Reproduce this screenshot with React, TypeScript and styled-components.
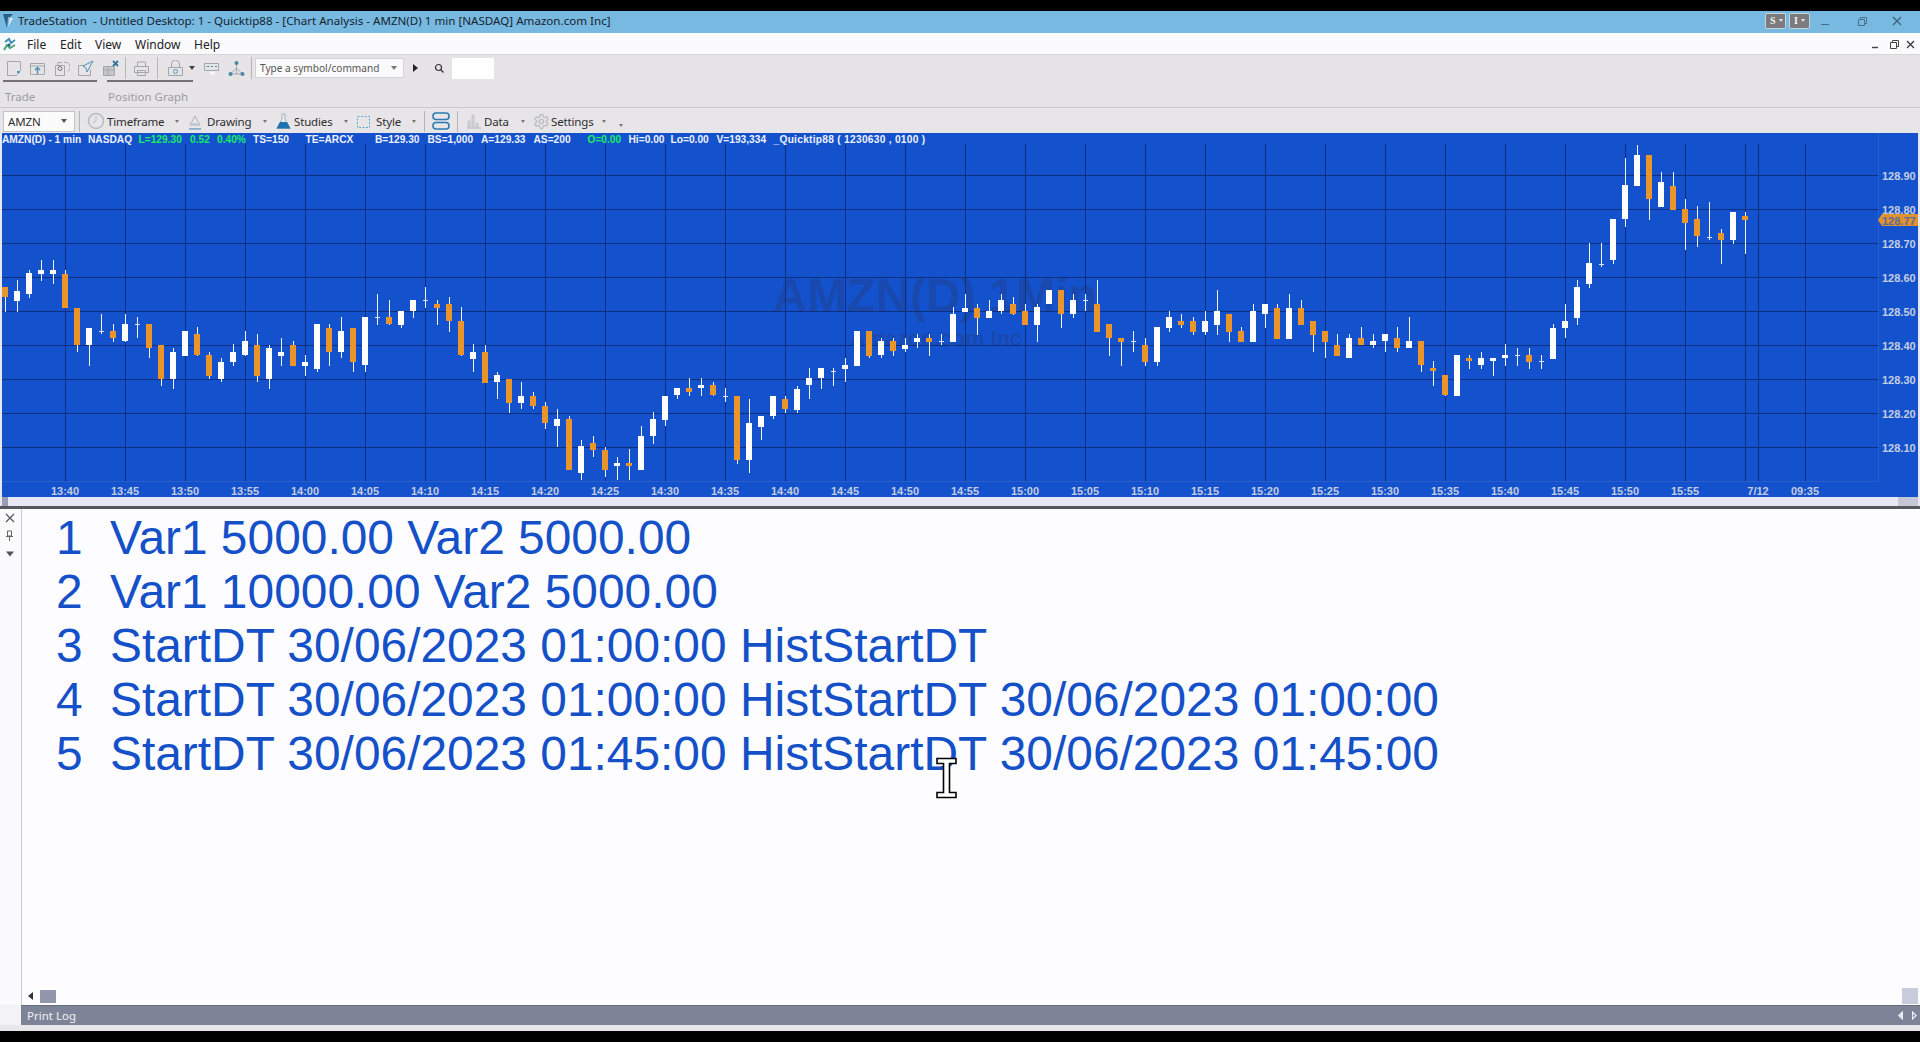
import React from "react";
import styled, { createGlobalStyle } from "styled-components";

const Global = createGlobalStyle`
  html, body { margin: 0; padding: 0; background: #000; }
  * { box-sizing: border-box; }
`;

const UI = `"Noto Sans", "Open Sans", sans-serif`;
const ARIAL = `"Liberation Sans", Arial, sans-serif`;

const Page = styled.div`
  position: relative;
  width: 1920px;
  height: 1042px;
  background: #000;
  display: flex;
  flex-direction: column;
  overflow: hidden;
  font-family: ${UI};
`;
const BlackBand = styled.div<{ $h: number }>`
  flex: 0 0 ${(p) => p.$h}px;
  background: #000;
`;
const TitleBar = styled.div`
  flex: 0 0 22px;
  display: flex;
  align-items: center;
  background: #77b9e0;
  color: #16232e;
  font-size: 11.6px;
  padding: 0 0 3px 2px;
`;
const TitleText = styled.span`
  margin-left: 4px;
  white-space: pre;
`;
const TitleRight = styled.div`
  margin-left: auto;
  display: flex;
  align-items: center;
`;
const SIButton = styled.div<{ $ml: number }>`
  width: 21px;
  height: 16px;
  margin-left: ${(p) => p.$ml}px;
  background: #7b7b7d;
  border: 1px solid #c5d5df;
  border-radius: 2px;
  color: #f4f4f4;
  font: bold 10px "Liberation Serif", serif;
  display: flex;
  align-items: center;
  padding-left: 4px;
  gap: 3px;
`;
const MiniCaret = styled.span`
  width: 0;
  height: 0;
  border-left: 2px solid transparent;
  border-right: 2px solid transparent;
  border-top: 3px solid #e6e6e6;
`;
const WinGlyph = styled.svg<{ $ml: number; $mr?: number }>`
  display: block;
  margin-left: ${(p) => p.$ml}px;
  margin-right: ${(p) => p.$mr ?? 0}px;
  flex: none;
`;
const MenuBar = styled.div`
  flex: 0 0 22px;
  display: flex;
  align-items: center;
  background: #fbfafd;
  border-bottom: 1px solid #d6d6da;
  color: #222;
  font-size: 12px;
  padding: 1px 0 0 3px;
`;
const MenuItem = styled.span<{ $w: number }>`
  width: ${(p) => p.$w}px;
  flex: none;
`;
const MenuLogoBox = styled.span`
  width: 24px;
  flex: none;
  display: flex;
`;
const ToolArea = styled.div`
  flex: 0 0 53px;
  background: #e7e4e7;
  border-bottom: 1px solid #c9c9d2;
  display: flex;
  flex-direction: column;
`;
const IconRow = styled.div`
  height: 25px;
  display: flex;
  align-items: center;
  padding-top: 1px;
`;
const ToolIconBox = styled.span<{ $ml: number; $w?: number }>`
  margin-left: ${(p) => p.$ml}px;
  width: ${(p) => p.$w ?? 17}px;
  flex: none;
  display: flex;
  justify-content: center;
  align-items: center;
`;
const VSep = styled.span<{ $ml: number; $h?: number; $c?: string }>`
  margin-left: ${(p) => p.$ml}px;
  width: 1px;
  height: ${(p) => p.$h ?? 22}px;
  background: ${(p) => p.$c ?? "#b4b4b8"};
  flex: none;
`;
const SymbolInput = styled.div`
  margin-left: 3px;
  width: 149px;
  height: 20px;
  background: #fafafa;
  border: 1px solid #d4d4d8;
  color: #555;
  font-size: 10.1px;
  display: flex;
  align-items: center;
  padding: 0 6px 0 4px;
  justify-content: space-between;
  flex: none;
`;
const PlayGlyph = styled.svg`
  margin-left: 6px;
  flex: none;
`;
const BlankBox = styled.div`
  margin-left: 7px;
  width: 42px;
  height: 21px;
  background: #fff;
  flex: none;
`;
const DarkCaret = styled.span<{ $ml?: number; $c?: string }>`
  display: inline-block;
  margin-left: ${(p) => p.$ml ?? 0}px;
  width: 0;
  height: 0;
  border-left: 3px solid transparent;
  border-right: 3px solid transparent;
  border-top: 4px solid ${(p) => p.$c ?? "#555"};
  flex: none;
`;
const UnderlineRow = styled.div`
  height: 2px;
  display: flex;
`;
const Underline = styled.span<{ $ml: number; $w: number }>`
  margin-left: ${(p) => p.$ml}px;
  width: ${(p) => p.$w}px;
  background: #727276;
`;
const TabLabels = styled.div`
  margin-top: 6px;
  height: 17px;
  display: flex;
  align-items: center;
  color: #9b9b9f;
  font-size: 11.5px;
`;
const TabLabel = styled.span<{ $ml: number; $w: number }>`
  margin-left: ${(p) => p.$ml}px;
  width: ${(p) => p.$w}px;
`;
const ChartBar = styled.div`
  flex: 0 0 25px;
  background: #e7e5e8;
  display: flex;
  align-items: center;
  color: #2d2d30;
  font-size: 11.5px;
  letter-spacing: -0.15px;
  padding: 1px 0 0 3px;
`;
const SymbolBox = styled.div`
  width: 72px;
  height: 21px;
  background: #fbfbfb;
  border: 1px solid #c4c4c8;
  display: flex;
  align-items: center;
  justify-content: space-between;
  padding: 0 7px 0 4px;
  font-size: 11.5px;
  flex: none;
`;
const ChartButton = styled.div<{ $w: number; $icon: number; $ml?: number }>`
  width: ${(p) => p.$w}px;
  margin-left: ${(p) => p.$ml ?? 0}px;
  flex: none;
  display: flex;
  align-items: center;
  svg { flex: none; }
  & > span:first-child {
    width: ${(p) => p.$icon}px;
    flex: none;
    display: flex;
  }
`;
const ButtonCaret = styled(DarkCaret)`
  margin-left: auto;
  margin-right: 8px;
  border-left-width: 2.5px;
  border-right-width: 2.5px;
  border-top: 3px solid #77777a;
`;
const LowCaret = styled(ButtonCaret)`
  margin: 9px 0 0 5px;
`;
const ChartPane = styled.div`
  position: relative;
  flex: 0 0 364px;
  background: #e8e8f4;
  padding: 0 2px;
`;
const ChartSvg = styled.svg`
  display: block;
  background: #1452cd;
`;
const Legend = styled.div`
  position: absolute;
  top: 0;
  left: 2px;
  height: 12px;
  display: flex;
  align-items: center;
  font: bold 10.2px ${ARIAL};
  white-space: pre;
`;
const LegendItem = styled.span<{ $w: number; $green?: boolean; $track?: number }>`
  width: ${(p) => p.$w}px;
  color: ${(p) => (p.$green ? "#17ee66" : "#eef1fb")};
  letter-spacing: ${(p) => p.$track ?? 0}px;
  flex: none;
`;
const HScroll = styled.div`
  flex: 0 0 9px;
  background: #e8e8f5;
  display: flex;
  justify-content: space-between;
  padding: 0 2px;
`;
const HScrollEnd = styled.span<{ $w: number; $c: string }>`
  width: ${(p) => p.$w}px;
  background: ${(p) => p.$c};
`;
const Divider = styled.div`
  flex: 0 0 3px;
  background: #54585f;
`;
const Lower = styled.div`
  flex: 1;
  display: flex;
  min-height: 0;
  background: #fdfcfe;
`;
const SidePanel = styled.div`
  flex: 0 0 22px;
  border-right: 1px solid #c9c9cf;
  background: #fbfbfd;
  display: flex;
  flex-direction: column;
  align-items: center;
  padding: 4px 2px 0 0;
`;
const SideGlyph = styled.svg<{ $mt: number }>`
  margin-top: ${(p) => p.$mt}px;
  display: block;
  flex: none;
`;
const LogPane = styled.div`
  flex: 1;
  display: flex;
  flex-direction: column;
  min-width: 0;
`;
const LogText = styled.div`
  flex: 1;
  padding: 2px 0 0 34px;
  color: #1450c8;
  font: 47.88px/54px ${ARIAL};
  white-space: pre;
`;
const LogRow = styled.div`
  display: flex;
  height: 54px;
`;
const LogNum = styled.span`
  width: 54px;
  flex: none;
`;
const LogScroll = styled.div`
  height: 17px;
  display: flex;
  align-items: center;
  padding: 0 2px 1px 6px;
`;
const LeftArrow = styled.span`
  width: 0;
  height: 0;
  border-top: 4px solid transparent;
  border-bottom: 4px solid transparent;
  border-right: 5px solid #333;
`;
const ScrollThumb = styled.span<{ $c: string; $ml?: string; $h: number }>`
  width: 16px;
  height: ${(p) => p.$h}px;
  background: ${(p) => p.$c};
  margin-left: ${(p) => p.$ml ?? "7px"};
`;
const TabRow = styled.div`
  flex: 0 0 20px;
  padding-left: 21px;
  background: #f3f3f6;
  display: flex;
`;
const TabBar = styled.div`
  flex: 1;
  background: #7e8497;
  border-top: 1px solid #686d7d;
  display: flex;
  align-items: center;
  color: #f0f1f5;
  font-size: 11.5px;
  padding: 0 0 0 6px;
`;
const TabNav = styled.div`
  margin-left: auto;
  display: flex;
  gap: 9px;
  padding-right: 3px;
`;
const BottomStrip = styled.div`
  flex: 0 0 6px;
  background: #e8e7ea;
`;
const Cursor = styled.svg`
  position: absolute;
  left: 936px;
  top: 757px;
`;

type C = [number, number, number, number, 0 | 1];
// wick top, wick bottom, body top, body bottom, orange — in the crop's y units
const bars: C[] = [
[472,545,472,502,1],[450,545,482,512,0],[420,503,430,492,0],[390,453,420,431,0],[390,462,420,431,0],
[420,533,431,533,1],[533,665,533,644,1],[593,707,593,644,0],[552,613,604,604,0],[582,635,604,625,1],
[552,635,583,635,0],[562,625,583,583,0],[583,685,583,654,1],[644,767,644,746,1],[655,777,665,746,0],
[603,677,603,677,0],[592,677,613,677,1],[665,747,675,737,1],[685,757,695,747,0],[643,707,665,696,0],
[603,677,634,677,0],[613,757,644,737,1],[644,777,655,747,0],[624,707,665,677,0],[634,707,644,707,1],
[675,737,695,707,0],[583,725,583,717,0],[583,707,593,665,1],[562,685,603,665,0],[593,725,593,695,1],
[562,725,562,707,0],[492,584,562,562,0],[511,584,562,584,1],[543,593,543,584,0],[511,564,511,544,0],
[472,533,511,511,0],[511,584,522,533,1],[502,605,522,574,1],[532,677,574,677,1],[643,725,665,685,0],
[644,757,665,757,1],[725,808,736,757,0],[746,848,746,817,1],[757,838,797,817,0],[787,838,797,827,1],
[817,898,827,878,1],[838,950,868,889,0],[858,1021,868,1021,1],[930,1049,949,1030,0],[918,980,939,959,1],
[950,1040,959,1020,1],[980,1049,1000,1010,0],[958,1049,1000,1010,1],[888,1021,918,1021,0],[847,941,868,919,0],
[797,889,797,868,0],[775,808,775,797,0],[745,797,775,787,1],[745,797,766,776,0],[757,797,766,797,1],
[775,817,797,797,0],[797,1001,797,990,1],[807,1030,878,990,0],[857,930,857,889,0],[797,868,797,858,0],
[797,848,807,838,1],[767,848,776,838,0],[715,808,745,767,0],[715,777,715,746,0],[715,767,723,723,0],
[685,757,705,716,0],[603,707,603,707,0],[603,685,603,677,1],[624,685,634,677,0],[624,677,634,665,1],
[624,665,644,655,0],[613,655,624,635,0],[613,677,624,635,1],[613,645,634,634,0],[532,636,552,636,0],
[492,545,533,544,0],[522,615,533,564,1],[511,564,543,563,0],[492,553,511,544,0],[502,554,522,553,1],
[522,585,543,585,1],[522,636,532,585,0],[481,523,481,523,0],[481,594,481,553,1],[492,564,511,553,0],
[492,544,511,511,0],[451,605,522,605,1],[583,677,583,625,1],[624,707,624,635,1],[603,665,634,634,0],
[624,707,644,696,1],[592,707,592,696,0],[543,605,562,594,0],[552,594,573,584,1],[562,615,573,605,1],
[543,615,573,605,0],[481,615,543,584,0],[552,636,552,605,1],[592,636,603,636,1],[522,636,543,636,0],
[522,594,522,553,0],[522,625,533,625,1],[492,626,533,625,0],[511,585,533,585,1],[573,665,573,615,1],
[603,685,603,635,1],[613,677,644,677,1],[613,685,624,685,0],[592,645,624,644,1],[613,655,634,645,0],
[613,665,613,635,0],[592,665,624,655,1],[562,655,634,655,0],[634,725,634,707,1],[693,767,715,725,1],
[736,797,736,797,1],[675,797,675,797,0],[675,717,685,695,1],[665,717,685,707,0],[685,737,685,695,0],
[643,707,675,685,0],[655,707,676,676,0],[655,717,675,695,1],[675,717,693,693,0],[583,685,593,685,0],
[522,625,573,594,0],[451,585,471,564,0],[339,473,400,462,0],[339,412,401,401,0],[268,401,268,391,0],
[85,290,166,269,0],[44,168,75,168,0],[75,270,75,208,1],[126,230,156,230,0],[126,240,167,240,1],
[207,361,238,280,1],[228,351,268,320,1],[217,329,320,320,0],[298,401,309,329,1],[247,341,247,330,0],
[247,371,258,269,1],
];
const realY = (v: number) => 130 + v / 3;
const barX = (i: number) => Math.round(65.3 + 12 * (i - 5));

const hLines = [175, 209, 243, 277, 311, 345, 379, 413, 447];
const prices = ["128.90", "128.80", "128.70", "128.60", "128.50", "128.40", "128.30", "128.20", "128.10"];
const times: [string, number][] = [];
for (let k = 0; k < 28; k++) {
  const m = 13 * 60 + 40 + k * 5;
  times.push([`${Math.floor(m / 60)}:${String(m % 60).padStart(2, "0")}`, Math.round(65.3 + 60 * k)]);
}
const labelled: [string, number][] = [...times, ["7/12", 1758], ["09:35", 1805]];
const vLines = [...times.map((t) => t[1]), 1745, 1758, 1805];

const legend: { t: string; w: number; g?: boolean; track?: number }[] = [
  { t: "AMZN(D) - 1 min", w: 86 },
  { t: "NASDAQ", w: 50.5 },
  { t: "L=129.30", w: 51.5, g: true },
  { t: "0.52", w: 27, g: true },
  { t: "0.40%", w: 36, g: true },
  { t: "TS=150", w: 52.5 },
  { t: "TE=ARCX", w: 69.5 },
  { t: "B=129.30", w: 52.5 },
  { t: "BS=1,000", w: 53.5 },
  { t: "A=129.33", w: 52.5 },
  { t: "AS=200", w: 54 },
  { t: "O=0.00", w: 41, g: true },
  { t: "Hi=0.00", w: 42 },
  { t: "Lo=0.00", w: 46 },
  { t: "V=193,334", w: 57 },
  { t: "_Quicktip88 ( 1230630 , 0100 )", w: 170, track: 0.27 },
];

const logLines: [string, string][] = [
  ["1", "Var1 5000.00 Var2 5000.00"],
  ["2", "Var1 10000.00 Var2 5000.00"],
  ["3", "StartDT 30/06/2023 01:00:00 HistStartDT"],
  ["4", "StartDT 30/06/2023 01:00:00 HistStartDT 30/06/2023 01:00:00"],
  ["5", "StartDT 30/06/2023 01:45:00 HistStartDT 30/06/2023 01:45:00"],
];

const G = "#a3a7ac";
const B = "#4f93b8";

const Ico = ({ children, w = 17, h = 17 }: { children: React.ReactNode; w?: number; h?: number }) => (
  <svg width={w} height={h} viewBox={`0 0 ${w} ${h}`} fill="none" stroke={G} strokeWidth="1">
    {children}
  </svg>
);

const ChartCanvas = () => (
  <ChartSvg width={1916} height={364} viewBox="2 133 1916 364">
    <text x="773" y="312" fontFamily={ARIAL} fontWeight="bold" fontSize="47.5" fill="#1949ae">AMZN(D) 1Min</text>
    <text x="850" y="346" fontFamily={ARIAL} fontWeight="bold" fontSize="21.6" fill="#1949ae">Amazon.com Inc</text>
    <g stroke="#0d2f7c" strokeWidth="1" shapeRendering="crispEdges">
      {hLines.map((y) => (
        <line key={y} x1="2" x2="1878" y1={y + 0.5} y2={y + 0.5} />
      ))}
      {vLines.map((x) => (
        <line key={x} x1={x + 0.5} x2={x + 0.5} y1="144" y2="481" />
      ))}
    </g>
    <g stroke="#2a5fc6" strokeWidth="1" shapeRendering="crispEdges">
      <line x1="2" x2="1878" y1="481.5" y2="481.5" />
      <line x1="1878.5" x2="1878.5" y1="133" y2="481" />
    </g>
    <g shapeRendering="crispEdges">
      {bars.map(([wt, wb, bt, bb, o], i) => {
        const x = barX(i);
        const top = realY(bt);
        const bot = realY(bb);
        const fill = o ? "#ea942a" : "#ffffff";
        return (
          <g key={i}>
            <rect x={x} y={realY(wt)} width="1" height={realY(wb) - realY(wt)} fill="#f2f5fd" />
            {bb - bt < 2 ? (
              <rect x={x - 2} y={Math.round(top)} width="5" height="1" fill="#dfe6f8" />
            ) : (
              <rect x={x - 3} y={Math.round(top)} width="6" height={Math.max(2, Math.round(bot - top))} fill={fill} />
            )}
          </g>
        );
      })}
    </g>
    <g fontFamily={ARIAL} fontWeight="bold" fontSize="11" fill="#c5cde0">
      {labelled.map(([t, x]) => (
        <text key={t} x={x} y="495" textAnchor="middle">{t}</text>
      ))}
      {prices.map((p, i) => (
        <text key={p} x="1882" y={hLines[i] + 4.5}>{p}</text>
      ))}
    </g>
    <polygon points="1878,220 1882,214 1918,214 1918,226 1882,226" fill="#df922e" />
    <text x="1882" y="224.5" fontFamily={ARIAL} fontWeight="bold" fontSize="11" fill="#5a6a9a">128.77</text>
  </ChartSvg>
);

export default function App() {
  return (
    <Page>
      <Global />
      <BlackBand $h={11} />
      <TitleBar>
        <svg width="12" height="16" viewBox="0 0 12 16">
          <path d="M1 1h10l-3 3H6l-1 11L3 8z" fill="#2a5f86" />
          <path d="M8 5l-2 9 5-9z" fill="#e8f0f5" />
        </svg>
        <TitleText>TradeStation  - Untitled Desktop: 1 - Quicktip88 - [Chart Analysis - AMZN(D) 1 min [NASDAQ] Amazon.com Inc]</TitleText>
        <TitleRight>
          <SIButton $ml={0}>S<MiniCaret /></SIButton>
          <SIButton $ml={3}>I<MiniCaret /></SIButton>
          <WinGlyph $ml={10} width="10" height="10" viewBox="0 0 10 10" stroke="#4b6f86" fill="none">
            <path d="M1 8.5h8" />
          </WinGlyph>
          <WinGlyph $ml={27} width="10" height="10" viewBox="0 0 10 10" stroke="#4b6f86" fill="none">
            <path d="M1.5 3.5h6v6h-6zM3.5 3.5v-2h6v6h-2" />
          </WinGlyph>
          <WinGlyph $ml={25} $mr={18} width="10" height="10" viewBox="0 0 10 10" stroke="#3f5f74" strokeWidth="1.2" fill="none">
            <path d="M1 1l8 8M9 1l-8 8" />
          </WinGlyph>
        </TitleRight>
      </TitleBar>
      <MenuBar>
        <MenuLogoBox>
          <svg width="13" height="15" viewBox="0 0 13 15">
            <path d="M2 5l4-3 2 4 4-3" stroke="#3d8fb4" strokeWidth="2" fill="none" />
            <path d="M1 13l3-5 3 3 5-3" stroke="#4aa37a" strokeWidth="2" fill="none" />
            <circle cx="6" cy="8" r="1.5" fill="#245f84" />
          </svg>
        </MenuLogoBox>
        <MenuItem $w={33}>File</MenuItem>
        <MenuItem $w={35}>Edit</MenuItem>
        <MenuItem $w={40}>View</MenuItem>
        <MenuItem $w={59}>Window</MenuItem>
        <MenuItem $w={40}>Help</MenuItem>
        <TitleRight>
          <WinGlyph $ml={0} width="9" height="9" viewBox="0 0 9 9" stroke="#444" strokeWidth="1.4" fill="none">
            <path d="M1 7.5h6" />
          </WinGlyph>
          <WinGlyph $ml={9} width="10" height="10" viewBox="0 0 10 10" stroke="#444" fill="none">
            <path d="M1.5 3.5h6v6h-6zM3.5 3.5v-2h6v6h-2" />
          </WinGlyph>
          <WinGlyph $ml={7} $mr={5} width="9" height="9" viewBox="0 0 9 9" stroke="#333" strokeWidth="1.2" fill="none">
            <path d="M1 1l7 7M8 1l-7 7" />
          </WinGlyph>
        </TitleRight>
      </MenuBar>
      <ToolArea>
        <IconRow>
          <ToolIconBox $ml={6}>
            <Ico><path d="M1.5 1.5h13v9l-4 5h-9z" /><path d="M11 12l3 0" stroke={B} strokeWidth="2" /></Ico>
          </ToolIconBox>
          <ToolIconBox $ml={6}>
            <Ico><path d="M1.5 3.5h14v11h-14z M1.5 6h14" /><path d="M8.5 14V8M6 10l2.5-2.5L11 10" stroke={B} strokeWidth="1.5" /></Ico>
          </ToolIconBox>
          <ToolIconBox $ml={7}>
            <Ico><path d="M2.5 5.5h9v10h-9zM5 5V2.5h4M11 2.5a5 5 0 0 1 4 9" /><circle cx="7" cy="8.5" r="2" stroke="#777" /></Ico>
          </ToolIconBox>
          <ToolIconBox $ml={7}>
            <Ico><path d="M1.5 5.5h6M1.5 5.5v10h12v-6" /><path d="M16 1L6 6l3 2 1 4z" stroke={B} /></Ico>
          </ToolIconBox>
          <ToolIconBox $ml={8}>
            <Ico><path d="M1.5 6.5h11v9h-11z" fill="#c6c6c8" /><path d="M1.5 10h11M6 6.5v9" /><path d="M11 1l5 5M16 1l-5 5" stroke="#2f7296" strokeWidth="1.8" /></Ico>
          </ToolIconBox>
          <VSep $ml={6} />
          <ToolIconBox $ml={7}>
            <Ico><path d="M4.5 6V2h8v4M1.5 6.5h14v6h-14zM4.5 10.5h8v5h-8z" /></Ico>
          </ToolIconBox>
          <VSep $ml={7} />
          <ToolIconBox $ml={9}>
            <Ico><path d="M1.5 7.5h14v8h-14zM4.5 7V4a4 4 0 0 1 8 0v3" /><circle cx="8.5" cy="11.5" r="2" stroke={B} /></Ico>
          </ToolIconBox>
          <DarkCaret $ml={5} $c="#444" />
          <ToolIconBox $ml={9} $w={15}>
            <Ico w={15} h={15}><path d="M.5 2.5h14v7H.5z" /><path d="M2.5 5.5h3M7 5.5h2M11 5.5h2" stroke={B} /><path d="M6 12h5" stroke="#f7f7f7" strokeWidth="3" /></Ico>
          </ToolIconBox>
          <ToolIconBox $ml={9}>
            <Ico><path d="M8.5 3v5L2.5 14M8.5 8l6 6M2.5 14h12M8.5 3v11" /><circle cx="8.5" cy="3" r="2" fill="#4c86a8" stroke="none" /><circle cx="2.5" cy="14" r="2" fill="#4c86a8" stroke="none" /><circle cx="14.5" cy="14" r="2" fill="#4c86a8" stroke="none" /></Ico>
          </ToolIconBox>
          <VSep $ml={6} />
          <SymbolInput>Type a symbol/command<DarkCaret $c="#777" /></SymbolInput>
          <PlayGlyph width="23" height="14" viewBox="0 0 23 14">
            <path d="M3 3l5 4-5 4z" fill="#222" />
          </PlayGlyph>
          <svg width="12" height="12" viewBox="0 0 12 12" fill="none" stroke="#333" strokeWidth="1.2">
            <circle cx="5.5" cy="5.5" r="3" /><path d="M8 8l2.5 2.5" />
          </svg>
          <BlankBox />
        </IconRow>
        <UnderlineRow>
          <Underline $ml={3} $w={94} />
          <Underline $ml={10} $w={86} />
        </UnderlineRow>
        <TabLabels>
          <TabLabel $ml={5} $w={103}>Trade</TabLabel>
          <TabLabel $ml={0} $w={100}>Position Graph</TabLabel>
        </TabLabels>
      </ToolArea>
      <ChartBar>
        <SymbolBox>AMZN<DarkCaret $c="#555" /></SymbolBox>
        <VSep $ml={4} $h={21} />
        <ChartButton $w={100} $icon={20} $ml={7}>
          <span>
            <Ico w={18} h={18}><circle cx="9" cy="9" r="7.5" stroke="#b8bcc0" strokeWidth="1.5" /><path d="M9 4v5l-3 2" stroke="#b8bcc0" /></Ico>
          </span>
          Timeframe<ButtonCaret />
        </ChartButton>
        <ChartButton $w={88} $icon={20}>
          <span>
            <Ico w={16} h={17}><path d="M2 15.5h12M3 12l5-9 5 9z" stroke="#b0b4b8" /><path d="M2 16h12" stroke="#7fb0cc" strokeWidth="1.5" /><path d="M5 11h6" stroke="#9fbccd" /></Ico>
          </span>
          Drawing<ButtonCaret />
        </ChartButton>
        <ChartButton $w={81} $icon={19}>
          <span>
            <svg width="17" height="17" viewBox="0 0 17 17">
              <path d="M7 1h3v5l5 9.5H2L7 6z" fill="#e6eef4" stroke="#a2b0ba" />
              <path d="M5 9h7l3.5 6.5h-14z" fill="#1f74ad" />
            </svg>
          </span>
          Studies<ButtonCaret />
        </ChartButton>
        <ChartButton $w={68} $icon={20}>
          <span>
            <svg width="16" height="16" viewBox="0 0 16 16" fill="none" stroke="#5aa7cf" strokeDasharray="2 1.5">
              <path d="M1.5 3.5h12v11h-12z" />
            </svg>
          </span>
          Style<ButtonCaret />
        </ChartButton>
        <VSep $h={21} $ml={0} />
        <ToolIconBox $ml={7} $w={18}>
          <svg width="18" height="20" viewBox="0 0 18 20" fill="none" stroke="#2a7cb0" strokeWidth="1.6">
            <rect x="1" y="2" width="16" height="6.5" rx="3" />
            <rect x="1" y="11.5" width="16" height="6.5" rx="3" />
          </svg>
        </ToolIconBox>
        <VSep $ml={7} $h={21} />
        <ChartButton $w={67} $icon={18} $ml={8}>
          <span>
            <Ico w={16} h={16}><path d="M2 14V8h2v6zM6 14V2h2v12zM10 14v-4h2v4z" stroke="#c3c5c8" fill="#d4d4d6" /><path d="M1 15h14" stroke="#b4b6b8" /></Ico>
          </span>
          Data<ButtonCaret />
        </ChartButton>
        <ChartButton $w={81} $icon={18}>
          <span>
            <svg width="17" height="17" viewBox="0 0 24 24" fill="none" stroke="#bcbec2" strokeWidth="2">
              <path d="M12.22 2h-.44a2 2 0 0 0-2 2v.18a2 2 0 0 1-1 1.73l-.43.25a2 2 0 0 1-2 0l-.15-.08a2 2 0 0 0-2.73.73l-.22.38a2 2 0 0 0 .73 2.73l.15.1a2 2 0 0 1 1 1.72v.51a2 2 0 0 1-1 1.74l-.15.09a2 2 0 0 0-.73 2.73l.22.38a2 2 0 0 0 2.73.73l.15-.08a2 2 0 0 1 2 0l.43.25a2 2 0 0 1 1 1.73V20a2 2 0 0 0 2 2h.44a2 2 0 0 0 2-2v-.18a2 2 0 0 1 1-1.73l.43-.25a2 2 0 0 1 2 0l.15.08a2 2 0 0 0 2.73-.73l.22-.39a2 2 0 0 0-.73-2.73l-.15-.08a2 2 0 0 1-1-1.74v-.5a2 2 0 0 1 1-1.74l.15-.09a2 2 0 0 0 .73-2.73l-.22-.38a2 2 0 0 0-2.73-.73l-.15.08a2 2 0 0 1-2 0l-.43-.25a2 2 0 0 1-1-1.73V4a2 2 0 0 0-2-2z" />
              <circle cx="12" cy="12" r="3" />
            </svg>
          </span>
          Settings<ButtonCaret />
        </ChartButton>
        <LowCaret />
      </ChartBar>
      <ChartPane>
        <ChartCanvas />
        <Legend>
          {legend.map((l) => (
            <LegendItem key={l.t} $w={l.w} $green={l.g} $track={l.track}>{l.t}</LegendItem>
          ))}
        </Legend>
      </ChartPane>
      <HScroll>
        <HScrollEnd $w={6} $c="#9a9db0" />
        <HScrollEnd $w={20} $c="#c5c7d6" />
      </HScroll>
      <Divider />
      <Lower>
        <SidePanel>
          <SideGlyph $mt={0} width="10" height="10" viewBox="0 0 10 10" stroke="#555" strokeWidth="1.2" fill="none"><path d="M1 1l8 8M9 1l-8 8" /></SideGlyph>
          <SideGlyph $mt={7} width="9" height="11" viewBox="0 0 9 11" stroke="#666" fill="none"><path d="M2.5 1h4v5h-4zM1 6.5h7M4.5 7v4" /></SideGlyph>
          <SideGlyph $mt={10} width="10" height="6" viewBox="0 0 10 6"><path d="M1 .5h8L5 5.5z" fill="#555" /></SideGlyph>
        </SidePanel>
        <LogPane>
          <LogText>
            {logLines.map(([n, t]) => (
              <LogRow key={n}>
                <LogNum>{n}</LogNum>
                {t}
              </LogRow>
            ))}
          </LogText>
          <LogScroll>
            <LeftArrow />
            <ScrollThumb $c="#9397ad" $h={13} />
            <ScrollThumb $c="#c9ccdc" $ml="auto" $h={16} />
          </LogScroll>
        </LogPane>
      </Lower>
      <TabRow>
        <TabBar>
          Print Log
          <TabNav>
            <svg width="5" height="9" viewBox="0 0 5 9" fill="none" stroke="#eef0f6" strokeWidth="1.2"><path d="M4.5 1L.8 4.5 4.5 8z" fill="#dfe2ea" /></svg>
            <svg width="5" height="9" viewBox="0 0 5 9" fill="none" stroke="#eef0f6" strokeWidth="1.2"><path d="M.5 1l3.7 3.5L.5 8z" /></svg>
          </TabNav>
        </TabBar>
      </TabRow>
      <BottomStrip />
      <BlackBand $h={11} />
      <Cursor width="21" height="42" viewBox="0 0 21 42">
        <path d="M1 1.5h19v5h-6.5v29H20v5H1v-5h6.5v-29H1z" fill="#fff" stroke="#000" strokeWidth="1.6" />
      </Cursor>
    </Page>
  );
}
